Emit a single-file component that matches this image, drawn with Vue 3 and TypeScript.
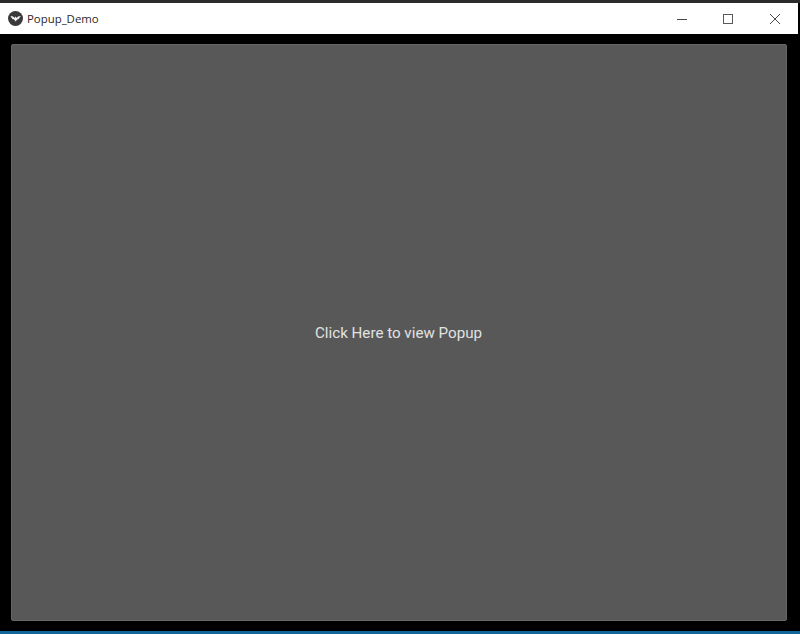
<script setup lang="ts">
const title: string = "Popup_Demo";
const label: string = "Click Here to view Popup";
</script>

<template>
  <div class="screen">
    <div class="window">
      <header class="titlebar">
        <svg class="logo" width="15" height="15" viewBox="0 0 15 15">
          <circle cx="7.5" cy="7.5" r="7.5" fill="#3a3a3a" />
          <path d="M2.4 5 L5.2 5.4 L6.4 7 L7.4 5.4 L8.8 7 L10 5.4 L12.8 5 L10.6 8 L9.2 8.4 L7.6 10.4 L6.2 8.6 L4.4 8 Z" fill="#f4f4f4" />
        </svg>
        <span class="title">{{ title }}</span>
        <div class="controls">
          <svg class="ctl" width="12" height="12" viewBox="0 0 12 12">
            <path d="M1 6.5 H11" stroke="#4a4a4a" stroke-width="1" fill="none" />
          </svg>
          <svg class="ctl" width="12" height="12" viewBox="0 0 12 12">
            <rect x="1.5" y="1.5" width="9" height="9" stroke="#5a5a5a" stroke-width="1" fill="none" />
          </svg>
          <svg class="ctl ctl-close" width="12" height="12" viewBox="0 0 12 12">
            <path d="M1 1 L11 11 M11 1 L1 11" stroke="#4a4a4a" stroke-width="1" fill="none" />
          </svg>
        </div>
      </header>
      <main class="body">
        <button class="button" type="button">{{ label }}</button>
      </main>
    </div>
    <div class="taskbar"></div>
  </div>
</template>

<style scoped>
.screen {
  width: 800px;
  height: 634px;
  display: flex;
  flex-direction: column;
  background: #000;
  overflow: hidden;
}
.window {
  flex: 1;
  min-height: 0;
  display: flex;
  flex-direction: column;
  border-top: 3px solid #2b2b2b;
}
.titlebar {
  height: 31px;
  margin-right: 2px;
  flex: none;
  display: flex;
  align-items: center;
  padding-left: 8px;
  background: #fff;
}
.logo {
  flex: none;
}
.title {
  margin-left: 4px;
  font-family: "Open Sans", "Noto Sans", sans-serif;
  font-size: 11.4px;
  color: #2a2a2a;
}
.controls {
  margin-left: auto;
  display: flex;
  align-items: center;
  gap: 34px;
  padding-right: 17px;
}
.ctl {
  display: block;
}
.ctl-close {
  margin-left: 1px;
}
.body {
  flex: 1;
  min-height: 0;
  display: flex;
  padding: 10px 13px 10px 11px;
}
.button {
  flex: 1;
  border: 1px solid #666;
  border-radius: 2px;
  padding: 0 1px 0 0;
  background: #585858;
  color: #e2e2e2;
  font-family: Roboto, "Liberation Sans", sans-serif;
  font-size: 15.15px;
  text-align: center;
}
.taskbar {
  height: 3px;
  flex: none;
  background: #12669a;
}
</style>
